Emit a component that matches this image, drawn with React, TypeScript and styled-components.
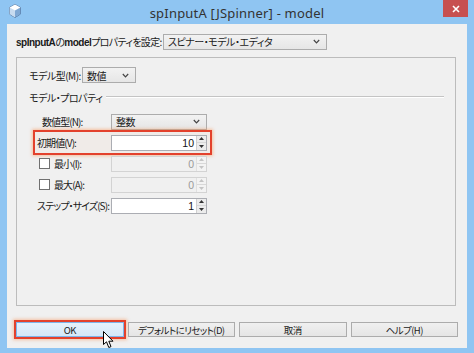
import React from "react";
import styled, { createGlobalStyle } from "styled-components";

const Global = createGlobalStyle`
  html, body { margin: 0; padding: 0; background: #8fc5f2; }
  #root { width: 474px; height: 353px; overflow: hidden; }
`;

const UI = `"Noto Sans CJK JP", "DejaVu Sans", sans-serif`;

const Window = styled.div`
  width: 474px;
  height: 353px;
  background: #8fc5f2;
  display: flex;
  flex-direction: column;
  position: relative;
  font-family: ${UI};
  font-feature-settings: "palt";
  font-size: 10px;
  color: #1a1a1a;
`;

const TitleBar = styled.div`
  height: 24px;
  position: relative;
  display: flex;
  align-items: center;
  justify-content: center;
`;

const TitleIcon = styled.svg`
  position: absolute;
  left: 9px;
  top: 4px;
`;

const TitleText = styled.div`
  font-family: "Noto Sans", "DejaVu Sans", sans-serif;
  font-size: 13px;
  color: #333;
  margin-top: 1px;
  letter-spacing: 0.2px;
`;

const CloseBtn = styled.div`
  position: absolute;
  right: 6px;
  top: 0;
  width: 25px;
  height: 17px;
  background: #c75050;
  display: flex;
  align-items: center;
  justify-content: center;
`;

const Client = styled.div`
  margin: 0 7px 5px 7px;
  flex: 1;
  background: #f0f0f0;
  padding: 9px 11px 0 9px;
  display: flex;
  flex-direction: column;
`;

const TopRow = styled.div`
  display: flex;
  align-items: center;
  height: 17px;
`;

const TopLabel = styled.div`
  width: 147px;
  white-space: nowrap;
  letter-spacing: -0.7px;
`;

const Bold = styled.b`
  font-family: "Liberation Sans", sans-serif;
  font-weight: bold;
  font-size: 10px;
  letter-spacing: -0.5px;
`;

const Combo = styled.div<{ $w: number }>`
  width: ${(p) => p.$w}px;
  height: 16px;
  box-sizing: border-box;
  border: 1px solid #acacac;
  background: linear-gradient(#f2f2f2, #e6e6e6);
  display: flex;
  align-items: center;
  padding: 0 6px 0 4px;
  white-space: nowrap;
  letter-spacing: -0.5px;
`;

const ComboText = styled.span`
  flex: 1;
`;

const Panel = styled.div`
  margin-top: 7px;
  width: 440px;
  height: 249px;
  box-sizing: border-box;
  border: 1px solid #bcbcbc;
  padding: 9px 11px 0 12px;
  display: flex;
  flex-direction: column;
`;

const ModelRow = styled.div`
  display: flex;
  align-items: center;
  height: 16px;
`;

const ModelLabel = styled.div`
  width: 53px;
  white-space: nowrap;
  letter-spacing: -0.5px;
`;

const GroupTitle = styled.div`
  margin-top: 8px;
  height: 12px;
  display: flex;
  align-items: center;
  gap: 4px;
  white-space: nowrap;
  letter-spacing: -0.5px;
`;

const GroupLine = styled.div`
  flex: 1;
  height: 0;
  border-top: 1px solid #c4c4c4;
  border-bottom: 1px solid #ffffff;
`;

const Rows = styled.div`
  margin-top: 8px;
  margin-left: 6px;
  display: flex;
  flex-direction: column;
  width: 175px;
`;

const Row = styled.div<{ $hl?: boolean }>`
  height: 21px;
  display: grid;
  grid-template-columns: 74px 96px;
  align-items: center;
  padding: 0 3px 0 2px;
  ${(p) =>
    p.$hl
      ? `box-shadow: 0 0 0 2px #e3412c, 0 0 3px 3px rgba(250, 150, 90, 0.55); background: #f0ebe8;`
      : ""}
`;

const RowLabel = styled.div<{ $indent?: number }>`
  display: flex;
  align-items: center;
  gap: 4px;
  padding-left: ${(p) => p.$indent ?? 0}px;
  white-space: nowrap;
  letter-spacing: -0.9px;
`;

const Check = styled.span`
  width: 11px;
  height: 11px;
  box-sizing: border-box;
  border: 1px solid #707070;
  background: #fff;
  margin-left: 2px;
`;

const Field = styled.div<{ $disabled?: boolean }>`
  height: 16px;
  box-sizing: border-box;
  border: 1px solid ${(p) => (p.$disabled ? "#d3d3d3" : "#abadb3")};
  background: ${(p) => (p.$disabled ? "#f0f0f0" : "#ffffff")};
  display: flex;
  align-items: stretch;
  color: ${(p) => (p.$disabled ? "#9a9a9a" : "#111")};
  font-family: "Liberation Sans", sans-serif;
  font-size: 10.5px;
`;

const FieldValue = styled.div`
  flex: 1;
  display: flex;
  align-items: center;
  justify-content: flex-end;
  padding-right: 2px;
`;

const Arrows = styled.div<{ $disabled?: boolean }>`
  width: 9px;
  display: flex;
  flex-direction: column;
  border-left: 1px solid ${(p) => (p.$disabled ? "#e0e0e0" : "#d0d0d0")};
  background: ${(p) => (p.$disabled ? "#f3f3f3" : "#ececec")};
`;

const ArrowHalf = styled.div<{ $bottom?: boolean }>`
  flex: 1;
  display: flex;
  align-items: center;
  justify-content: center;
  ${(p) => (p.$bottom ? "border-top: 1px solid #d8d8d8;" : "")}
`;

const Footer = styled.div`
  margin-top: 16px;
  margin-right: -2px;
  display: grid;
  grid-template-columns: repeat(4, 1fr);
  gap: 4px;
  position: relative;
`;

const Button = styled.div<{ $focus?: boolean }>`
  height: 15px;
  box-sizing: border-box;
  border: 1px solid ${(p) => (p.$focus ? "#7eb4ea" : "#acacac")};
  background: ${(p) =>
    p.$focus ? "linear-gradient(#e5f1fb, #d4e8f9)" : "linear-gradient(#f0f0f0, #e5e5e5)"};
  display: flex;
  align-items: center;
  justify-content: center;
  white-space: nowrap;
  letter-spacing: -0.6px;
  font-size: 9.5px;
  ${(p) =>
    p.$focus
      ? `box-shadow: 0 0 0 2px #e3412c, 0 0 3px 3px rgba(250, 150, 90, 0.5);`
      : ""}
`;

const Cursor = styled.svg`
  position: absolute;
  left: 87px;
  top: 9px;
`;

const Chevron = () => (
  <svg width="7" height="5" viewBox="0 0 7 5">
    <polyline points="0.8,1 3.5,3.8 6.2,1" fill="none" stroke="#444" strokeWidth="1.2" />
  </svg>
);

const Spin = ({ disabled }: { disabled?: boolean }) => {
  const c = disabled ? "#c4c4c4" : "#333";
  return (
    <Arrows $disabled={disabled}>
      <ArrowHalf>
        <svg width="5" height="3" viewBox="0 0 5 3">
          <polygon points="0,3 2.5,0 5,3" fill={c} />
        </svg>
      </ArrowHalf>
      <ArrowHalf $bottom>
        <svg width="5" height="3" viewBox="0 0 5 3">
          <polygon points="0,0 2.5,3 5,0" fill={c} />
        </svg>
      </ArrowHalf>
    </Arrows>
  );
};

const Spinner = ({ value, disabled }: { value: string; disabled?: boolean }) => (
  <Field $disabled={disabled}>
    <FieldValue>{value}</FieldValue>
    <Spin disabled={disabled} />
  </Field>
);

export default function App() {
  return (
    <>
      <Global />
      <Window>
        <TitleBar>
          <TitleIcon width="12" height="14" viewBox="0 0 12 14">
            <polygon points="6,0.5 11.5,3.5 11.5,10 6,13.5 0.5,10 0.5,3.5" fill="#e9f2fb" stroke="#4a6f9a" strokeWidth="1" />
            <polygon points="6,0.5 11.5,3.5 6,6.5 0.5,3.5" fill="#ffffff" />
            <polygon points="6,6.5 11.5,3.5 11.5,10 6,13.5" fill="#7ea7d3" />
            <polygon points="6,6.5 0.5,3.5 0.5,10 6,13.5" fill="#c7dbf0" />
          </TitleIcon>
          <TitleText>spInputA [JSpinner] - model</TitleText>
          <CloseBtn>
            <svg width="8" height="8" viewBox="0 0 8 8">
              <path d="M1 1 L7 7 M7 1 L1 7" stroke="#ffffff" strokeWidth="1.6" />
            </svg>
          </CloseBtn>
        </TitleBar>
        <Client>
          <TopRow>
            <TopLabel>
              <Bold>spInputA</Bold>の<Bold>model</Bold>プロパティを設定:
            </TopLabel>
            <Combo $w={164}>
              <ComboText>スピナー・モデル・エディタ</ComboText>
              <Chevron />
            </Combo>
          </TopRow>
          <Panel>
            <ModelRow>
              <ModelLabel>モデル型(M):</ModelLabel>
              <Combo $w={54}>
                <ComboText>数値</ComboText>
                <Chevron />
              </Combo>
            </ModelRow>
            <GroupTitle>
              モデル・プロパティ
              <GroupLine />
            </GroupTitle>
            <Rows>
              <Row>
                <RowLabel $indent={5}>数値型(N):</RowLabel>
                <Combo $w={96}>
                  <ComboText>整数</ComboText>
                  <Chevron />
                </Combo>
              </Row>
              <Row $hl>
                <RowLabel>初期値(V):</RowLabel>
                <Spinner value="10" />
              </Row>
              <Row>
                <RowLabel>
                  <Check />
                  最小(I):
                </RowLabel>
                <Spinner value="0" disabled />
              </Row>
              <Row>
                <RowLabel>
                  <Check />
                  最大(A):
                </RowLabel>
                <Spinner value="0" disabled />
              </Row>
              <Row>
                <RowLabel>ステップ・サイズ(S):</RowLabel>
                <Spinner value="1" />
              </Row>
            </Rows>
          </Panel>
          <Footer>
            <Button $focus>OK</Button>
            <Button>デフォルトにリセット(D)</Button>
            <Button>取消</Button>
            <Button>ヘルプ(H)</Button>
            <Cursor width="12" height="18" viewBox="0 0 12 18">
              <path d="M0.5 0.5 L0.5 13.5 L3.5 10.8 L5.8 16.5 L8 15.6 L5.8 10.2 L10 10.2 Z" fill="#ffffff" stroke="#000" strokeWidth="1" strokeLinejoin="round" />
            </Cursor>
          </Footer>
        </Client>
      </Window>
    </>
  );
}
